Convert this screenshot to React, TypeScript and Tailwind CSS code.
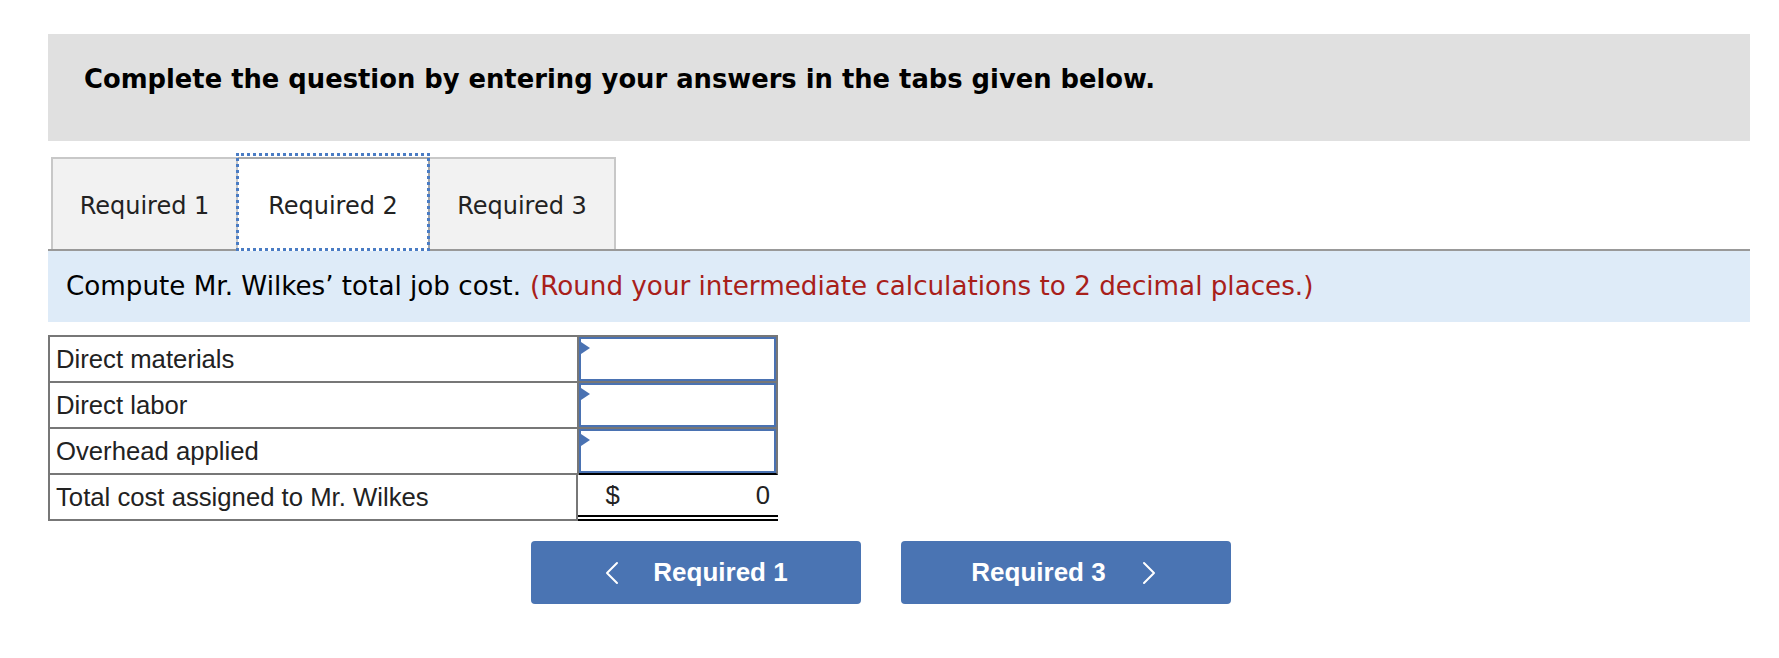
import { ChevronLeft, ChevronRight } from 'lucide-react';

const verdana = 'font-["DejaVu_Sans",Verdana,sans-serif]';
const arial = 'font-["Liberation_Sans",Arial,sans-serif]';

function InputCell({ last }: { last?: boolean }) {
  return (
    <div
      className={
        'w-[200px] border-r-2 border-b-2 border-r-[#777] ' +
        (last ? 'border-b-black' : 'border-b-[#777]')
      }
    >
      <div className="relative h-full w-full border-2 border-[#4a72b2] bg-white">
        {/* little marker triangle */}
        <span className="absolute left-0 top-[3px] h-0 w-0 border-y-[6px] border-l-[9px] border-y-transparent border-l-[#4a72b2]" />
      </div>
    </div>
  );
}

const rows = ['Direct materials', 'Direct labor', 'Overhead applied'];

export default function App() {
  return (
    <div className="min-h-screen bg-white pt-[34px] text-black">
      {/* Instruction header */}
      <div className="ml-[48px] h-[107px] w-[1702px] bg-[#e0e0e0] pl-[36px] pt-[30px]">
        <h1 className={`${verdana} text-[25.8px] font-bold leading-[31px]`}>
          Complete the question by entering your answers in the tabs given below.
        </h1>
      </div>

      {/* Tabs */}
      <div className={`${verdana} ml-[48px] mt-[16px] flex w-[1702px] items-end border-b-2 border-[#999] pl-[3px]`}>
        <button className="flex h-[92px] w-[187px] items-center justify-center border-2 border-b-0 border-[#c8c8c8] bg-[#f2f2f2] pt-[4px] text-[24px] text-[#222]">
          Required 1
        </button>
        <button className="relative z-10 -mb-[2px] flex h-[94px] w-[192px] items-center justify-center border-t-2 border-r-2 border-[#a8a8a8] bg-white pt-[2px] text-[24px] text-[#222]">
          Required 2
          <span className="pointer-events-none absolute -top-[6px] -left-[2px] -right-[2px] bottom-0 border-[3px] border-dotted border-[#4a7cc4]" />
        </button>
        <button className="flex h-[92px] w-[186px] items-center justify-center border-2 border-b-0 border-l-0 border-[#c8c8c8] bg-[#f2f2f2] pt-[4px] text-[24px] text-[#222]">
          Required 3
        </button>
      </div>

      {/* Question band */}
      <div className={`${verdana} ml-[48px] flex h-[71px] w-[1702px] items-center bg-[#deebf8] pl-[18px] text-[26.2px]`}>
        <span className="text-black">Compute Mr. Wilkes’ total job cost.</span>
        <span className="ml-[9px] text-[#a8201a]">(Round your intermediate calculations to 2 decimal places.)</span>
      </div>

      {/* Answer table */}
      <div className={`${arial} ml-[48px] mt-[13px] w-[730px] border-t-2 border-l-2 border-[#777] text-[25.7px] text-[#222]`}>
        {rows.map((label, i) => (
          <div key={label} className="flex h-[46px]">
            <div className="flex w-[530px] items-center border-r-2 border-b-2 border-[#777] pl-[6px]">
              {label}
            </div>
            <InputCell last={i === rows.length - 1} />
          </div>
        ))}
        <div className="flex h-[46px]">
          <div className="flex w-[530px] items-center border-r-2 border-b-2 border-[#777] pl-[6px]">
            Total cost assigned to Mr. Wilkes
          </div>
          <div className="flex w-[200px] items-center justify-between border-b-[6px] border-double border-black pl-[27px] pr-[8px]">
            <span>$</span>
            <span>0</span>
          </div>
        </div>
      </div>

      {/* Navigation buttons */}
      <div className={`${arial} mt-[20px] flex gap-[40px] pl-[531px]`}>
        <button className="flex h-[63px] w-[330px] items-center justify-center gap-[21px] rounded-[4px] bg-[#4a74b3] pr-[12px] text-[26px] font-bold text-white">
          <ChevronLeft size={40} strokeWidth={1.2} />
          <span>Required 1</span>
        </button>
        <button className="flex h-[63px] w-[330px] items-center justify-center gap-[23px] rounded-[4px] bg-[#4a74b3] pl-[8px] text-[26px] font-bold text-white">
          <span>Required 3</span>
          <ChevronRight size={40} strokeWidth={1.2} />
        </button>
      </div>
    </div>
  );
}
